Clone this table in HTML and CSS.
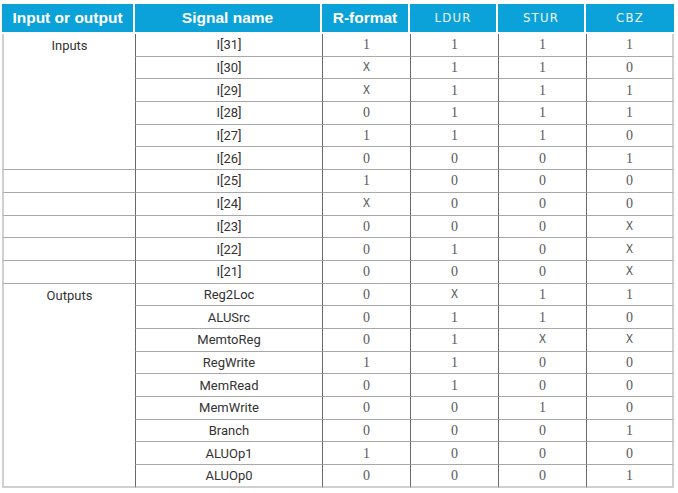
FILE: index.html
```html
<!DOCTYPE html>
<html>
<head>
<meta charset="utf-8">
<link rel="stylesheet" href="styles.css">
</head>
<body>
<table class="truth">
  <colgroup>
    <col class="c-io"><col class="c-sig"><col class="c-val"><col class="c-val"><col class="c-val"><col class="c-val">
  </colgroup>
  <thead>
    <tr>
      <th class="hb">Input or output</th>
      <th class="hb">Signal name</th>
      <th class="hb">R-format</th>
      <th class="hl">LDUR</th>
      <th class="hl">STUR</th>
      <th class="hl last">CBZ</th>
    </tr>
  </thead>
  <tbody>
    <tr><td class="grp span" rowspan="6">Inputs</td><td class="sig">I[31]</td><td>1</td><td>1</td><td>1</td><td>1</td></tr>
    <tr><td class="sig">I[30]</td><td class="x">X</td><td>1</td><td>1</td><td>0</td></tr>
    <tr><td class="sig">I[29]</td><td class="x">X</td><td>1</td><td>1</td><td>1</td></tr>
    <tr><td class="sig">I[28]</td><td>0</td><td>1</td><td>1</td><td>1</td></tr>
    <tr><td class="sig">I[27]</td><td>1</td><td>1</td><td>1</td><td>0</td></tr>
    <tr><td class="sig">I[26]</td><td>0</td><td>0</td><td>0</td><td>1</td></tr>
    <tr><td class="grp"></td><td class="sig">I[25]</td><td>1</td><td>0</td><td>0</td><td>0</td></tr>
    <tr><td class="grp"></td><td class="sig">I[24]</td><td class="x">X</td><td>0</td><td>0</td><td>0</td></tr>
    <tr><td class="grp"></td><td class="sig">I[23]</td><td>0</td><td>0</td><td>0</td><td class="x">X</td></tr>
    <tr><td class="grp"></td><td class="sig">I[22]</td><td>0</td><td>1</td><td>0</td><td class="x">X</td></tr>
    <tr><td class="grp"></td><td class="sig">I[21]</td><td>0</td><td>0</td><td>0</td><td class="x">X</td></tr>
    <tr><td class="grp span bottom" rowspan="9">Outputs</td><td class="sig">Reg2Loc</td><td>0</td><td class="x">X</td><td>1</td><td>1</td></tr>
    <tr><td class="sig">ALUSrc</td><td>0</td><td>1</td><td>1</td><td>0</td></tr>
    <tr><td class="sig">MemtoReg</td><td>0</td><td>1</td><td class="x">X</td><td class="x">X</td></tr>
    <tr><td class="sig">RegWrite</td><td>1</td><td>1</td><td>0</td><td>0</td></tr>
    <tr><td class="sig">MemRead</td><td>0</td><td>1</td><td>0</td><td>0</td></tr>
    <tr><td class="sig">MemWrite</td><td>0</td><td>0</td><td>1</td><td>0</td></tr>
    <tr><td class="sig">Branch</td><td>0</td><td>0</td><td>0</td><td>1</td></tr>
    <tr><td class="sig">ALUOp1</td><td>1</td><td>0</td><td>0</td><td>0</td></tr>
    <tr><td class="sig">ALUOp0</td><td>0</td><td>0</td><td>0</td><td>1</td></tr>
  </tbody>
</table>
</body>
</html>
```
FILE: styles.css
```css
html, body {
  margin: 0;
  padding: 0;
  background: #ffffff;
}

body {
  padding: 4px 0 0 2px;
}

.truth {
  border-collapse: separate;
  border-spacing: 0;
  width: 672px;
  table-layout: fixed;
}

.c-io { width: 133px; }
.c-sig { width: 187px; }
.c-val { width: 88px; }

.truth thead tr {
  height: 30px;
}

.truth th {
  padding: 0;
  background: #0aa2d9;
  color: #ffffff;
  border-right: 2px solid #ffffff;
  border-bottom: 2px solid #ffffff;
  text-align: center;
  vertical-align: middle;
  line-height: 16px;
}

.truth th.last {
  border-right: none;
}

.truth th.hb {
  font-family: "Liberation Sans", Arial, sans-serif;
  font-weight: bold;
  font-size: 15.5px;
  letter-spacing: 0;
}

.truth th.hl {
  font-family: "DejaVu Sans Condensed", "DejaVu Sans", sans-serif;
  font-weight: normal;
  font-size: 13px;
  letter-spacing: 1.2px;
  color: #eef8fd;
}

.truth tbody tr {
  height: 22.7px;
}

.truth td {
  padding: 0;
  line-height: 15px;
  border-bottom: 1px solid #a8a8a8;
  border-left: 1px solid #6a6a6a;
  text-align: center;
  vertical-align: middle;
  font-family: "Liberation Serif", "Times New Roman", serif;
  font-size: 14px;
  color: #5a5a5a;
}

.truth td.x {
  font-family: "DejaVu Sans Condensed", "DejaVu Sans", sans-serif;
  font-size: 12px;
  color: #5a5a5a;
}

.truth td:last-child {
  border-right: 2px solid #d0d0d0;
}

.truth td.grp {
  border-left: 2px solid #d0d0d0;
  font-family: Roboto, "Liberation Sans", sans-serif;
  font-size: 13px;
  color: #333333;
}

.truth td.span {
  vertical-align: top;
  padding-top: 4px;
}

.truth td.sig {
  font-family: Roboto, "Liberation Sans", sans-serif;
  font-size: 13px;
  color: #333333;
}

.truth tbody tr:last-child td,
.truth td.bottom {
  border-bottom: 2px solid #d0d0d0;
}
```
